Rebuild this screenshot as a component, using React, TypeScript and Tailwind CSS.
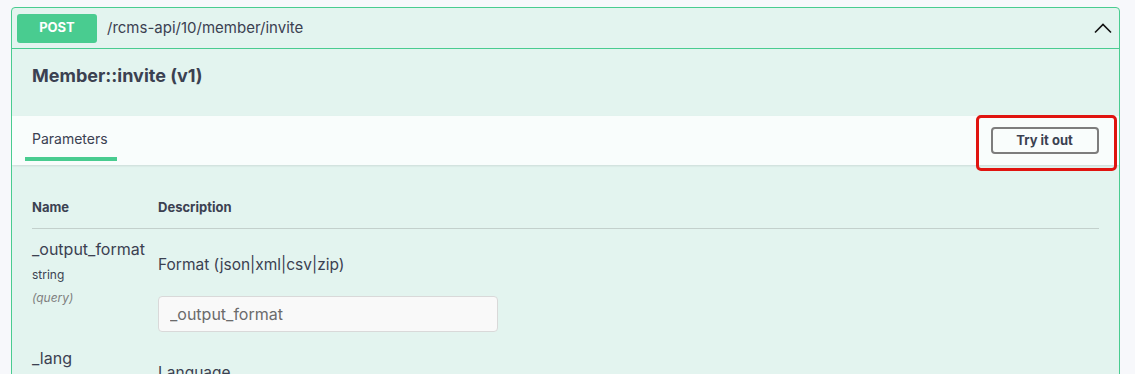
import { useState } from 'react';

export default function App() {
  const [value, setValue] = useState('');

  return (
    <div className="min-h-[374px] bg-[#f7f8fb] pt-[7px] pl-[11px] pr-[15px] font-['Inter',sans-serif] text-[#3b4151]">
      <div className="rounded-[4px] border border-[#49cc90] bg-[#e3f4ef] h-[380px] overflow-hidden">
        {/* summary */}
        <div className="flex items-center h-[41px] border-b border-[#49cc90] px-[5px]">
          <span className="flex items-center justify-center w-[80px] h-[29px] rounded-[3px] bg-[#49cc90] text-white text-[13px] font-bold">
            POST
          </span>
          <span className="ml-[10px] text-[15px] text-[#3b4151]">/rcms-api/10/member/invite</span>
          <svg className="ml-auto mr-[1px]" width="20" height="20" viewBox="0 0 20 20" fill="none">
            <path d="M2 14.5 L10 6.5 L18 14.5" stroke="#111" strokeWidth="1.6" />
          </svg>
        </div>

        <div className="px-[20px] pt-[13px] h-[67px]">
          <h3 className="text-[18px] font-bold text-[#3b4151]">Member::invite (v1)</h3>
        </div>

        {/* tab header */}
        <div className="flex items-center justify-between h-[49px] bg-white/80 shadow-[0_1px_2px_rgba(0,0,0,0.1)] pl-[13px] pr-[2px]">
          <div className="flex flex-col self-stretch justify-end">
            <span className="px-[7px] text-[14px] text-[#3b4151] leading-none mb-[11px]">Parameters</span>
            <span className="block h-[4px] w-[92px] bg-[#49cc90] mb-[4px]" />
          </div>
          <div className="flex items-center justify-center w-[141px] h-[56px] border-[3px] border-[#e0140f] rounded-[5px] mt-[4px]">
            <button className="w-[108px] h-[27px] -mt-[4px] -ml-[4px] rounded-[4px] border-2 border-[#7d7d7d] bg-transparent text-[13px] font-bold text-[#3b4151]">
              Try it out
            </button>
          </div>
        </div>

        {/* parameters table */}
        <div className="px-[20px] pt-[33px]">
          <div className="flex border-b border-[#c3d0cc] pb-[10px]">
            <span className="w-[126px] text-[13px] font-bold">Name</span>
            <span className="text-[13px] font-bold">Description</span>
          </div>

          <div className="flex pt-[9px]">
            <div className="w-[126px]">
              <div className="text-[16px] leading-[22px]">_output_format</div>
              <div className="text-[12px] leading-[14px] mt-[8px]">string</div>
              <div className="text-[12px] italic text-[#808080] leading-[14px] mt-[9px]">(query)</div>
            </div>
            <div>
              <div className="text-[15.5px] mt-[18px] leading-[18px]">Format (json|xml|csv|zip)</div>
              <input
                value={value}
                onChange={(e) => setValue(e.target.value)}
                placeholder="_output_format"
                className="mt-[22px] w-[340px] h-[36px] rounded-[4px] border border-[#d9d9d9] bg-[#f9f9f9] px-[11px] text-[16px] placeholder:text-[#6b6b6b] outline-none"
              />
            </div>
          </div>

          <div className="flex pt-[15px]">
            <div className="w-[126px] text-[16px] leading-[22px]">_lang</div>
            <div className="text-[15.5px] mt-[14px]">Language</div>
          </div>
        </div>
      </div>
    </div>
  );
}
